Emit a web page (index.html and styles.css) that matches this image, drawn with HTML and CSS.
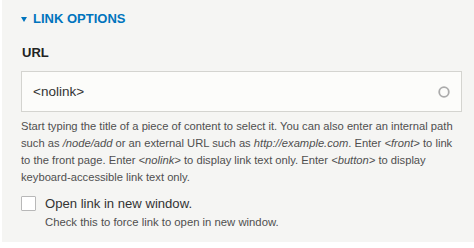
FILE: index.html
```html
<!DOCTYPE html>
<html>
<head>
<meta charset="utf-8">
<link rel="stylesheet" href="styles.css">
</head>
<body>
<div class="panel">
  <div class="summary"><span class="arrow"></span>LINK OPTIONS</div>
  <div class="field">
    <label class="label">URL</label>
    <div class="input">
      <span class="value">&lt;nolink&gt;</span>
      <svg class="throbber" width="12" height="12" viewBox="0 0 12 12"><circle cx="6" cy="6" r="4.8" fill="none" stroke="#ababab" stroke-width="1.8"/></svg>
    </div>
    <div class="desc">Start typing the title of a piece of content to select it. You can also enter an internal path such as <em>/node/add</em> or an external URL such as <em>http://example.com</em>. Enter <em>&lt;front&gt;</em> to link to the front page. Enter <em>&lt;nolink&gt;</em> to display link text only. Enter <em>&lt;button&gt;</em> to display keyboard-accessible link text only.</div>
  </div>
  <div class="check">
    <span class="box"></span>
    <span class="check-label">Open link in new window.</span>
  </div>
  <div class="check-desc">Check this to force link to open in new window.</div>
</div>
</body>
</html>
```
FILE: styles.css
```css
html, body {
  margin: 0;
  padding: 0;
  background: #ffffff;
}
body {
  font-family: "Liberation Sans", Arial, sans-serif;
  width: 474px;
  height: 248px;
  overflow: hidden;
}
.panel {
  margin-left: 2px;
  background: #f5f5f3;
  height: 242px;
  padding: 0 12px 0 19px;
  box-sizing: border-box;
}
.summary {
  display: flex;
  align-items: center;
  padding-top: 11px;
  height: 15px;
  color: #0074bd;
  font-weight: bold;
  font-size: 13px;
  line-height: 15px;
}
.arrow {
  width: 0;
  height: 0;
  border-left: 3px solid transparent;
  border-right: 3px solid transparent;
  border-top: 5px solid #0074bd;
  margin-right: 6px;
  margin-top: 1px;
}
.field {
  margin-top: 19px;
}
.label {
  display: block;
  font-weight: bold;
  font-size: 13px;
  line-height: 16px;
  color: #222;
  margin-left: 1px;
}
.input {
  margin-top: 10px;
  height: 41px;
  box-sizing: border-box;
  border: 1px solid #d4d4d0;
  background: #fcfcfa;
  display: flex;
  align-items: center;
  justify-content: space-between;
  padding: 0 11px 0 11px;
}
.value {
  font-size: 13.5px;
  color: #333;
}
.throbber {
  display: block;
}
.desc {
  margin-top: 6px;
  font-size: 11.2px;
  line-height: 17px;
  color: #4f4f4f;
}
.desc em {
  font-style: italic;
}
.check {
  display: flex;
  align-items: center;
  margin-top: 10px;
}
.box {
  width: 15px;
  height: 15px;
  box-sizing: border-box;
  border: 1px solid #b8b8b8;
  background: #fff;
  border-radius: 1px;
}
.check-label {
  margin-left: 9px;
  font-size: 13.1px;
  color: #333;
}
.check-desc {
  margin-left: 24px;
  margin-top: 5px;
  font-size: 11.3px;
  color: #4f4f4f;
}
```
